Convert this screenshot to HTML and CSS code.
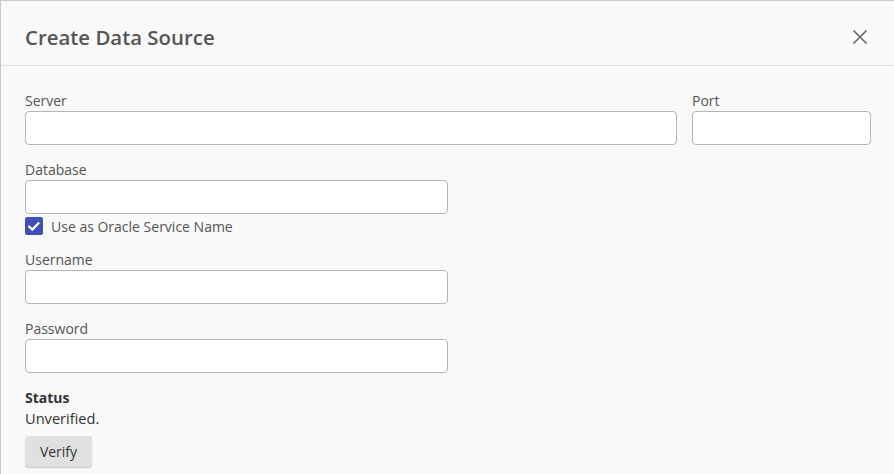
FILE: index.html
```html
<!DOCTYPE html>
<html>
<head>
<meta charset="utf-8">
<link rel="stylesheet" href="styles.css">
</head>
<body>
<div class="dialog">
  <div class="header">
    <h1 class="title">Create Data Source</h1>
    <button class="close" aria-label="Close">
      <svg width="16" height="16" viewBox="0 0 16 16"><path d="M1.5 1.5 L14.5 14.5 M14.5 1.5 L1.5 14.5" stroke="#666" stroke-width="1.6" fill="none"/></svg>
    </button>
  </div>
  <div class="body">
    <div class="row">
      <div class="field grow">
        <label class="label">Server</label>
        <input class="input" type="text">
      </div>
      <div class="field port">
        <label class="label">Port</label>
        <input class="input" type="text">
      </div>
    </div>
    <div class="field half">
      <label class="label">Database</label>
      <input class="input" type="text">
    </div>
    <div class="check-row">
      <span class="checkbox">
        <svg width="18" height="18" viewBox="0 0 18 18"><path d="M3.5 9 L7.3 12.6 L14.2 5.4" stroke="#fff" stroke-width="2.2" fill="none"/></svg>
      </span>
      <span class="check-label">Use as Oracle Service Name</span>
    </div>
    <div class="field half">
      <label class="label">Username</label>
      <input class="input" type="text">
    </div>
    <div class="field half">
      <label class="label">Password</label>
      <input class="input" type="password">
    </div>
    <div class="status">
      <div class="status-title">Status</div>
      <div class="status-text">Unverified.</div>
    </div>
    <button class="btn">Verify</button>
  </div>
</div>
</body>
</html>
```
FILE: styles.css
```css
html, body {
  margin: 0;
  padding: 0;
  background: #f9f9f9;
  font-family: "Open Sans", "Liberation Sans", sans-serif;
}
.dialog {
  width: 893px;
  height: 473px;
  border-left: 1px solid #c9c9c9;
  border-top: 1px solid #c9c9c9;
  background: #f9f9f9;
  overflow: hidden;
}
.header {
  box-sizing: border-box;
  height: 65px;
  border-bottom: 1px solid #e2e2e2;
  display: flex;
  align-items: center;
  justify-content: space-between;
  padding: 8px 23px 0 24px;
}
.title {
  margin: 0;
  font-size: 20.4px;
  font-weight: 600;
  color: #555;
  line-height: 28px;
}
.close {
  border: 0;
  background: none;
  padding: 0;
  width: 16px;
  height: 16px;
  margin-right: 3px;
  display: flex;
  cursor: pointer;
}
.body {
  padding: 25px 23px 0 24px;
}
.row {
  display: flex;
  gap: 15px;
}
.field {
  display: flex;
  flex-direction: column;
  margin-bottom: 15px;
}
.grow { flex: 1; }
.port { width: 179px; }
.half { width: 423px; }
.label {
  font-size: 14px;
  line-height: 19px;
  color: #555;
  margin-bottom: 1px;
}
.input {
  box-sizing: border-box;
  height: 34px;
  border: 1px solid #b5b5b5;
  border-radius: 4px;
  background: #fff;
  margin: 0;
  padding: 0 8px;
  font: inherit;
}
.field.half:nth-of-type(2) { margin-bottom: 0; }
.check-row {
  display: flex;
  align-items: center;
  gap: 8px;
  margin-top: 3px;
  margin-bottom: 15px;
  height: 18px;
}
.checkbox {
  width: 18px;
  height: 18px;
  background: #3f51b5;
  border-radius: 2px;
  display: flex;
}
.check-label {
  font-size: 14px;
  color: #555;
  line-height: 19px;
}
.status {
  font-size: 14px;
  line-height: 20px;
  color: #333;
}
.status-title { font-weight: 700; }
.status-text { font-size: 14.6px; }
.btn {
  margin-top: 8px;
  width: 67px;
  height: 31px;
  border: 0;
  border-radius: 3px;
  background: #e0e0e0;
  box-shadow: 0 1px 1px rgba(0,0,0,0.2);
  font: inherit;
  font-size: 14px;
  color: #333;
  padding: 0;
}
```
